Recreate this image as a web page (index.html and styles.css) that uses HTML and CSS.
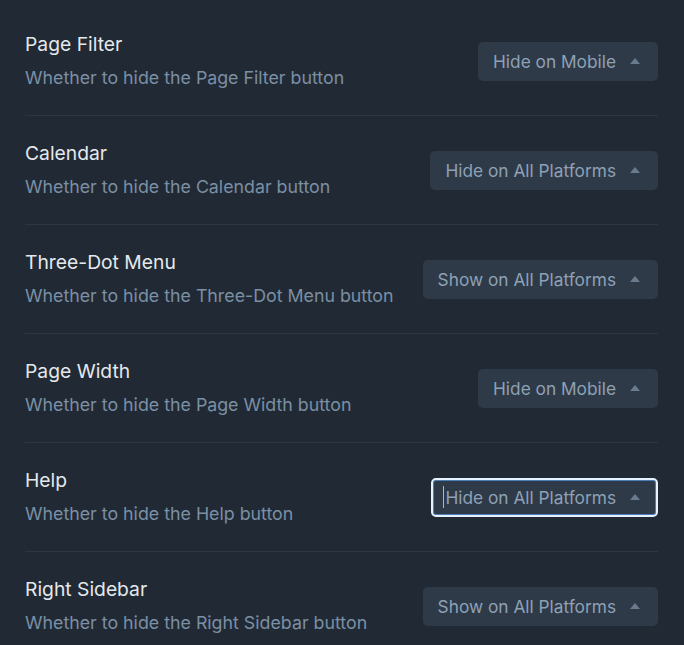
FILE: index.html
```html
<!doctype html>
<html lang="en">
<head>
    <meta charset="UTF-8">
    <title>Settings</title>
    <link rel="stylesheet" href="styles.css">
</head>
<body>
    <div class="settings">
        <div class="setting">
            <div class="info">
                <div class="name">Page Filter</div>
                <div class="desc">Whether to hide the Page Filter button</div>
            </div>
            <div class="select">Hide on Mobile<span class="caret"></span></div>
        </div>
        <div class="setting">
            <div class="info">
                <div class="name">Calendar</div>
                <div class="desc">Whether to hide the Calendar button</div>
            </div>
            <div class="select">Hide on All Platforms<span class="caret"></span></div>
        </div>
        <div class="setting">
            <div class="info">
                <div class="name">Three-Dot Menu</div>
                <div class="desc">Whether to hide the Three-Dot Menu button</div>
            </div>
            <div class="select">Show on All Platforms<span class="caret"></span></div>
        </div>
        <div class="setting">
            <div class="info">
                <div class="name">Page Width</div>
                <div class="desc">Whether to hide the Page Width button</div>
            </div>
            <div class="select">Hide on Mobile<span class="caret"></span></div>
        </div>
        <div class="setting">
            <div class="info">
                <div class="name">Help</div>
                <div class="desc">Whether to hide the Help button</div>
            </div>
            <div class="select focused"><span class="cursor"></span>Hide on All Platforms<span class="caret"></span></div>
        </div>
        <div class="setting">
            <div class="info">
                <div class="name">Right Sidebar</div>
                <div class="desc">Whether to hide the Right Sidebar button</div>
            </div>
            <div class="select">Show on All Platforms<span class="caret"></span></div>
        </div>
    </div>
</body>
</html>
```

FILE: styles.css
```css
* {
    margin: 0;
    padding: 0;
    box-sizing: border-box;
}

body {
    background-color: #212a34;
    font-family: Inter, "Noto Sans", sans-serif;
    overflow: hidden;
}

.settings {
    padding: 7px 26px 0 25px;
}

.setting {
    display: flex;
    align-items: center;
    justify-content: space-between;
    height: 109px;
    border-bottom: 1px solid #2d3743;
}

.name {
    color: #e4e8ec;
    font-size: 19.3px;
    line-height: 22px;
    margin-bottom: 11px;
}

.desc {
    color: #7b8fa5;
    font-size: 17.8px;
    line-height: 24px;
}

.select {
    display: flex;
    align-items: center;
    height: 39px;
    padding: 0 17px 0 14px;
    border: 1px solid transparent;
    border-radius: 5px;
    background-color: #2e3a48;
    color: #8ea1b5;
    font-size: 17.3px;
}

.select.focused {
    border: 2px solid #e6f2ff;
    box-shadow: inset 0 0 0 1px #4a7fb8;
    padding: 0 16px 0 10px;
}

.cursor {
    width: 1px;
    height: 22px;
    margin-right: 1px;
    background-color: #a9b9ca;
}

.caret {
    width: 0;
    height: 0;
    margin-left: 14px;
    border-left: 5px solid transparent;
    border-right: 5px solid transparent;
    border-bottom: 6px solid #6b7b8e;
}
```
